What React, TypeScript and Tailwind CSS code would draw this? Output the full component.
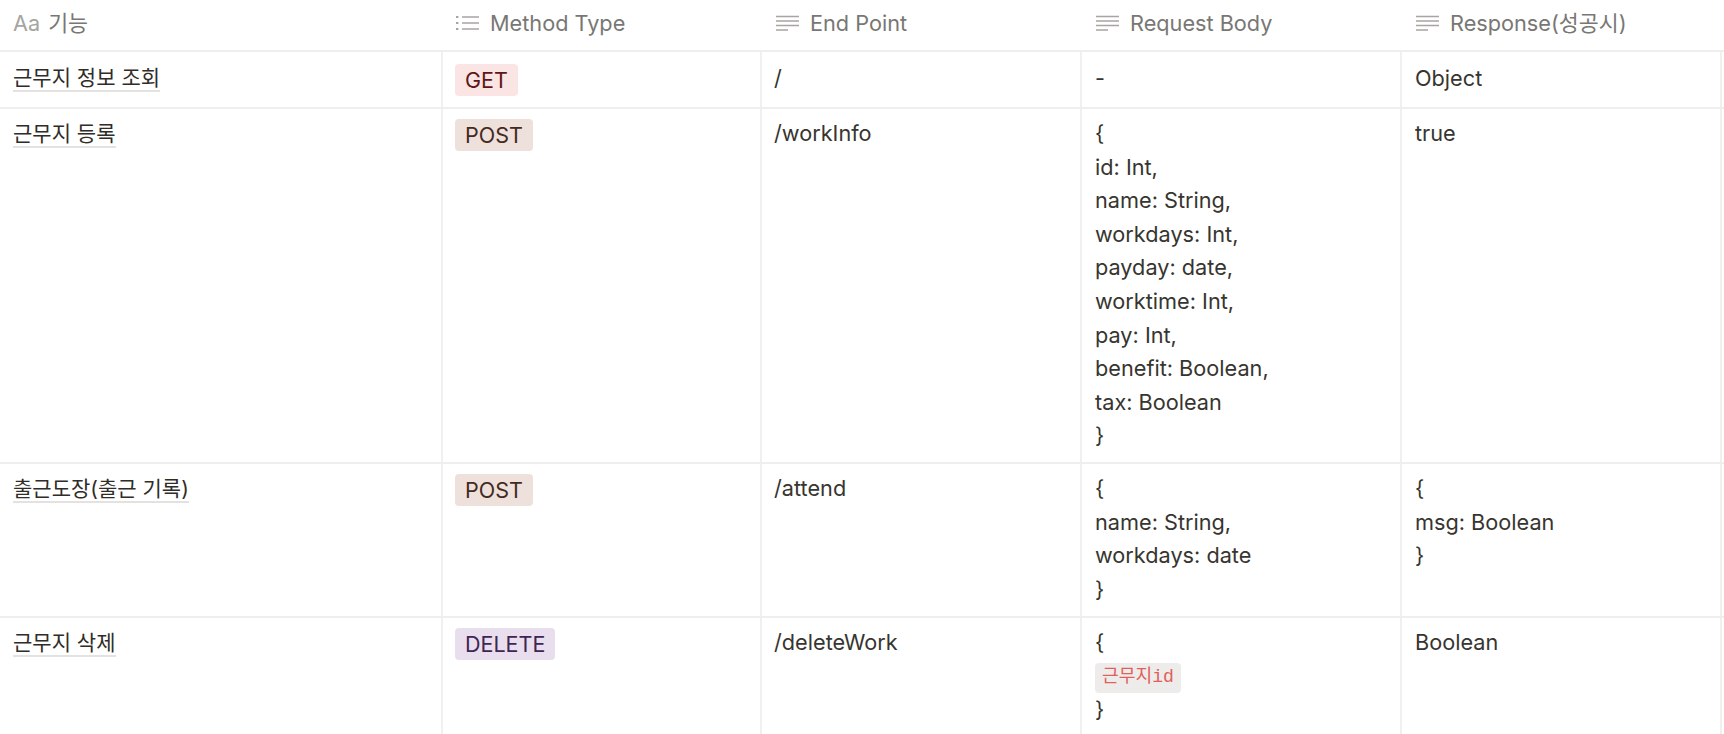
import React from 'react';

const FONT = 'font-["Inter","Noto_Sans_CJK_KR",sans-serif]';

const LinesIcon = () => (
    <svg width="25" height="20" viewBox="0 0 25 20" className="shrink-0 text-[#a6a5a1]" fill="none" stroke="currentColor" strokeWidth="1.6">
        <path d="M1 3.5h23M1 8h23M1 12.5h23M1 17h12" />
    </svg>
);

const ListIcon = () => (
    <svg width="25" height="20" viewBox="0 0 25 20" className="shrink-0 text-[#a6a5a1]" fill="none" stroke="currentColor" strokeWidth="1.6">
        <path d="M7 4h17M7 10h17M7 16h17" />
        <path d="M1 4h2.4M1 10h2.4M1 16h2.4" strokeWidth="2.2" />
    </svg>
);

const Tag = ({ label, className }: { label: string; className: string }) => (
    <span className={`inline-flex h-[32px] items-center rounded-[4px] px-[10px] text-[21.5px] ${className}`}>{label}</span>
);

const Title = ({ children }: { children: React.ReactNode }) => (
    <span className="border-b-2 border-[#e3e2e0] text-[21px] leading-[25px] text-[#2f2d28]">{children}</span>
);

const Lines = ({ items }: { items: React.ReactNode[] }) => (
    <div className="flex flex-col leading-[33.6px]">
        {items.map((item, i) => (
            <div key={i}>{item}</div>
        ))}
    </div>
);

const rows = [
    {
        title: '근무지 정보 조회',
        tag: <Tag label="GET" className="bg-[#fbe4e4] text-[#5d1715]" />,
        path: '/',
        body: ['-'],
        response: ['Object'],
        height: 'h-[57px]',
        titlePad: 'pt-[9px]',
        tagPad: 'pt-[12px]',
        textPad: 'pt-[10px]',
    },
    {
        title: '근무지 등록',
        tag: <Tag label="POST" className="bg-[#eee0da] text-[#442a1e]" />,
        path: '/workInfo',
        body: ['{', 'id: Int,', 'name: String,', 'workdays: Int,', 'payday: date,', 'worktime: Int,', 'pay: Int,', 'benefit: Boolean,', 'tax: Boolean', '}'],
        response: ['true'],
        height: 'h-[355px]',
        titlePad: 'pt-[8px]',
        tagPad: 'pt-[10px]',
        textPad: 'pt-[8px]',
    },
    {
        title: '출근도장(출근 기록)',
        tag: <Tag label="POST" className="bg-[#eee0da] text-[#442a1e]" />,
        path: '/attend',
        body: ['{', 'name: String,', 'workdays: date', '}'],
        response: ['{', 'msg: Boolean', '}'],
        height: 'h-[154px]',
        titlePad: 'pt-[8px]',
        tagPad: 'pt-[10px]',
        textPad: 'pt-[8px]',
    },
    {
        title: '근무지 삭제',
        tag: <Tag label="DELETE" className="bg-[#e8deee] text-[#412454]" />,
        path: '/deleteWork',
        body: [
            '{',
            <span className="inline-flex h-[30px] items-center rounded-[4px] bg-[#edeceb] px-[7px] align-middle text-[18.2px] text-[#e25f5c]" style={{ fontFamily: '"Liberation Mono","Noto Sans CJK KR",monospace' }}>
                근무지id
            </span>,
            '}',
        ],
        response: ['Boolean'],
        height: 'h-[130px]',
        titlePad: 'pt-[8px]',
        tagPad: 'pt-[10px]',
        textPad: 'pt-[8px]',
    },
];

const columns = 'grid grid-cols-[443px_319px_320px_320px_320px]';
const cell = 'border-r-2 border-[#f0f0ef]';

export default function App() {
    return (
        <div className={`h-[734px] w-[1724px] overflow-hidden bg-white text-[21.7px] text-[#37352f] ${FONT}`}>
            <div className={`${columns} h-[52px] items-center border-b-2 border-[#eeeeed] pb-[3px] text-[#787774]`}>
                <div className="flex items-center gap-[8px] pl-[13px]">
                    <span className="text-[#a6a5a1]">Aa</span>
                    <span>기능</span>
                </div>
                <div className="flex items-center gap-[10px] pl-[12px]"><ListIcon /><span>Method Type</span></div>
                <div className="flex items-center gap-[10px] pl-[13px]"><LinesIcon /><span>End Point</span></div>
                <div className="flex items-center gap-[10px] pl-[13px]"><LinesIcon /><span>Request Body</span></div>
                <div className="flex items-center gap-[10px] pl-[13px]"><LinesIcon /><span>Response(성공시)</span></div>
            </div>
            {rows.map((row) => (
                <div key={row.title} className={`${columns} ${row.height} border-b-2 border-[#eeeeed]`}>
                    <div className={`${cell} pl-[13px] ${row.titlePad}`}><Title>{row.title}</Title></div>
                    <div className={`${cell} pl-[12px] ${row.tagPad}`}>{row.tag}</div>
                    <div className={`${cell} pl-[12px] ${row.textPad} leading-[33.6px]`}>{row.path}</div>
                    <div className={`${cell} pl-[13px] ${row.textPad}`}><Lines items={row.body} /></div>
                    <div className={`${cell} pl-[13px] ${row.textPad}`}><Lines items={row.response} /></div>
                </div>
            ))}
        </div>
    );
}
